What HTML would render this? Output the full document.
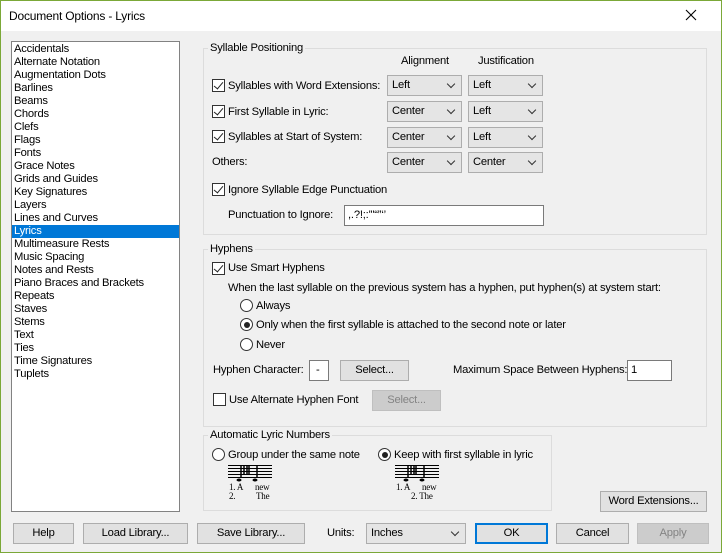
<!DOCTYPE html>
<html><head><meta charset="utf-8"><style>
*{box-sizing:border-box;margin:0;padding:0}
body{width:722px;height:553px;overflow:hidden;background:#f0f0f0;font-family:"Liberation Sans",sans-serif;font-size:11.2px;letter-spacing:-0.2px;color:#000;position:relative}
.win{position:absolute;left:0;top:0;width:722px;height:553px;border:1px solid #7ba838}
.title{position:absolute;left:1px;top:1px;width:720px;height:30px;background:#fff}
.a{position:absolute;white-space:nowrap;line-height:14px}
.cb{position:absolute;width:13px;height:13px;border:1px solid #333;background:#fff}
.cb.c::after{content:"";position:absolute;left:3px;top:0px;width:4px;height:8px;border:solid #222;border-width:0 1.3px 1.3px 0;transform:rotate(40deg)}
.rb{position:absolute;width:13px;height:13px;border:1px solid #333;border-radius:50%;background:#fff}
.rb.c::after{content:"";position:absolute;left:2.5px;top:2.5px;width:6px;height:6px;border-radius:50%;background:#222}
.dd{position:absolute;height:21px;border:1px solid #adadad;background:#e5e5e5;padding-left:4px;line-height:19px}
.dd::after{content:"";position:absolute;right:7px;top:5px;width:5px;height:5px;border:solid #333;border-width:0 1px 1px 0;transform:rotate(45deg)}
.btn{position:absolute;height:21px;border:1px solid #adadad;background:#e1e1e1;text-align:center;line-height:19px}
.inp{position:absolute;height:21px;border:1px solid #7a7a7a;background:#fff;padding-left:3px;line-height:19px}
.grp{position:absolute;border:1px solid #dcdcdc}
.gl{position:absolute;background:#f0f0f0;padding:0 2px;line-height:14px}
.list{position:absolute;left:11px;top:41px;width:169px;height:471px;border:1px solid #828282;background:#fff}
.list div{height:13px;line-height:13px;padding-left:2px}
.list .s{background:#0078d7;color:#fff}
</style></head><body>
<div class="win"></div>
<div class="title"></div>
<div class="a" style="left:9px;top:9px;font-size:12px">Document Options - Lyrics</div>
<svg style="position:absolute;left:685px;top:9px" width="12" height="12"><path d="M1 1L11 11M11 1L1 11" stroke="#000" stroke-width="1.1"/></svg>

<div class="list"><div style="height:1px"></div>
<div>Accidentals</div><div>Alternate Notation</div><div>Augmentation Dots</div><div>Barlines</div><div>Beams</div><div>Chords</div><div>Clefs</div><div>Flags</div><div>Fonts</div><div>Grace Notes</div><div>Grids and Guides</div><div>Key Signatures</div><div>Layers</div><div>Lines and Curves</div><div class="s">Lyrics</div><div>Multimeasure Rests</div><div>Music Spacing</div><div>Notes and Rests</div><div>Piano Braces and Brackets</div><div>Repeats</div><div>Staves</div><div>Stems</div><div>Text</div><div>Ties</div><div>Time Signatures</div><div>Tuplets</div></div>

<div class="grp" style="left:203px;top:48px;width:504px;height:187px"></div>
<div class="gl" style="left:208px;top:41px">Syllable Positioning</div>
<div class="a" style="left:401px;top:54px">Alignment</div>
<div class="a" style="left:478px;top:54px">Justification</div>

<div class="cb c" style="left:212px;top:79px"></div><div class="a" style="left:228px;top:79px">Syllables with Word Extensions:</div>
<div class="dd" style="left:387px;top:75px;width:75px">Left</div><div class="dd" style="left:468px;top:75px;width:75px">Left</div>
<div class="cb c" style="left:212px;top:105px"></div><div class="a" style="left:228px;top:105px">First Syllable in Lyric:</div>
<div class="dd" style="left:387px;top:101px;width:75px">Center</div><div class="dd" style="left:468px;top:101px;width:75px">Left</div>
<div class="cb c" style="left:212px;top:130px"></div><div class="a" style="left:228px;top:130px">Syllables at Start of System:</div>
<div class="dd" style="left:387px;top:127px;width:75px">Center</div><div class="dd" style="left:468px;top:127px;width:75px">Left</div>
<div class="a" style="left:212px;top:155px">Others:</div>
<div class="dd" style="left:387px;top:152px;width:75px">Center</div><div class="dd" style="left:468px;top:152px;width:75px">Center</div>
<div class="cb c" style="left:212px;top:183px"></div><div class="a" style="left:228px;top:183px">Ignore Syllable Edge Punctuation</div>
<div class="a" style="left:228px;top:208px">Punctuation to Ignore:</div>
<div class="inp" style="left:344px;top:205px;width:200px">,.?!;:'"“”‘’</div>

<div class="grp" style="left:203px;top:249px;width:504px;height:178px"></div>
<div class="gl" style="left:208px;top:242px">Hyphens</div>
<div class="cb c" style="left:212px;top:262px"></div><div class="a" style="left:228px;top:261px">Use Smart Hyphens</div>
<div class="a" style="left:228px;top:281px">When the last syllable on the previous system has a hyphen, put hyphen(s) at system start:</div>
<div class="rb" style="left:240px;top:299px"></div><div class="a" style="left:256px;top:299px">Always</div>
<div class="rb c" style="left:240px;top:318px"></div><div class="a" style="left:256px;top:318px">Only when the first syllable is attached to the second note or later</div>
<div class="rb" style="left:240px;top:338px"></div><div class="a" style="left:256px;top:338px">Never</div>
<div class="a" style="left:213px;top:363px">Hyphen Character:</div>
<div class="inp" style="left:309px;top:360px;width:20px;padding-left:6px">-</div>
<div class="btn" style="left:340px;top:360px;width:69px">Select...</div>
<div class="a" style="left:453px;top:363px">Maximum Space Between Hyphens:</div>
<div class="inp" style="left:627px;top:360px;width:45px">1</div>
<div class="cb" style="left:213px;top:393px"></div><div class="a" style="left:229px;top:393px">Use Alternate Hyphen Font</div>
<div class="btn" style="left:372px;top:390px;width:69px;color:#838383;background:#cccccc;border-color:#bfbfbf">Select...</div>

<div class="grp" style="left:203px;top:435px;width:349px;height:76px"></div>
<div class="gl" style="left:208px;top:428px">Automatic Lyric Numbers</div>
<div class="rb" style="left:212px;top:448px"></div><div class="a" style="left:228px;top:448px">Group under the same note</div>
<div class="rb c" style="left:378px;top:448px"></div><div class="a" style="left:394px;top:448px">Keep with first syllable in lyric</div>
<svg style="position:absolute;left:228px;top:463px" width="46" height="38">
<g stroke="#000" stroke-width="1"><path d="M0 2.5H44M0 5.5H44M0 8.5H44M0 11.5H44M0 14.5H44"/><path d="M13 2V14M16 2V12M19 2V12M21 2V12M29 2V14" stroke-width="1.5"/></g>
<ellipse cx="11" cy="17" rx="2.5" ry="1.5" fill="#000"/><ellipse cx="27" cy="17" rx="2.5" ry="1.5" fill="#000"/>
<text x="1" y="27" font-family="Liberation Serif" font-size="9">1. A</text><text x="27" y="27" font-family="Liberation Serif" font-size="9">new</text>
<text x="1" y="36" font-family="Liberation Serif" font-size="9">2.</text><text x="28" y="36" font-family="Liberation Serif" font-size="9">The</text></svg>
<svg style="position:absolute;left:395px;top:463px" width="46" height="38">
<g stroke="#000" stroke-width="1"><path d="M0 2.5H44M0 5.5H44M0 8.5H44M0 11.5H44M0 14.5H44"/><path d="M13 2V14M16 2V12M19 2V12M21 2V12M29 2V14" stroke-width="1.5"/></g>
<ellipse cx="11" cy="17" rx="2.5" ry="1.5" fill="#000"/><ellipse cx="27" cy="17" rx="2.5" ry="1.5" fill="#000"/>
<text x="1" y="27" font-family="Liberation Serif" font-size="9">1. A</text><text x="27" y="27" font-family="Liberation Serif" font-size="9">new</text>
<text x="16" y="36" font-family="Liberation Serif" font-size="9">2. The</text></svg>

<div class="btn" style="left:600px;top:491px;width:107px">Word Extensions...</div>

<div class="btn" style="left:13px;top:523px;width:61px">Help</div>
<div class="btn" style="left:83px;top:523px;width:105px">Load Library...</div>
<div class="btn" style="left:197px;top:523px;width:108px">Save Library...</div>
<div class="a" style="left:327px;top:526px">Units:</div>
<div class="dd" style="left:366px;top:523px;width:100px">Inches</div>
<div class="btn" style="left:475px;top:523px;width:73px;border:2px solid #0078d7;line-height:17px">OK</div>
<div class="btn" style="left:556px;top:523px;width:73px">Cancel</div>
<div class="btn" style="left:637px;top:523px;width:72px;color:#838383;background:#cccccc;border-color:#bfbfbf">Apply</div>
</body></html>
